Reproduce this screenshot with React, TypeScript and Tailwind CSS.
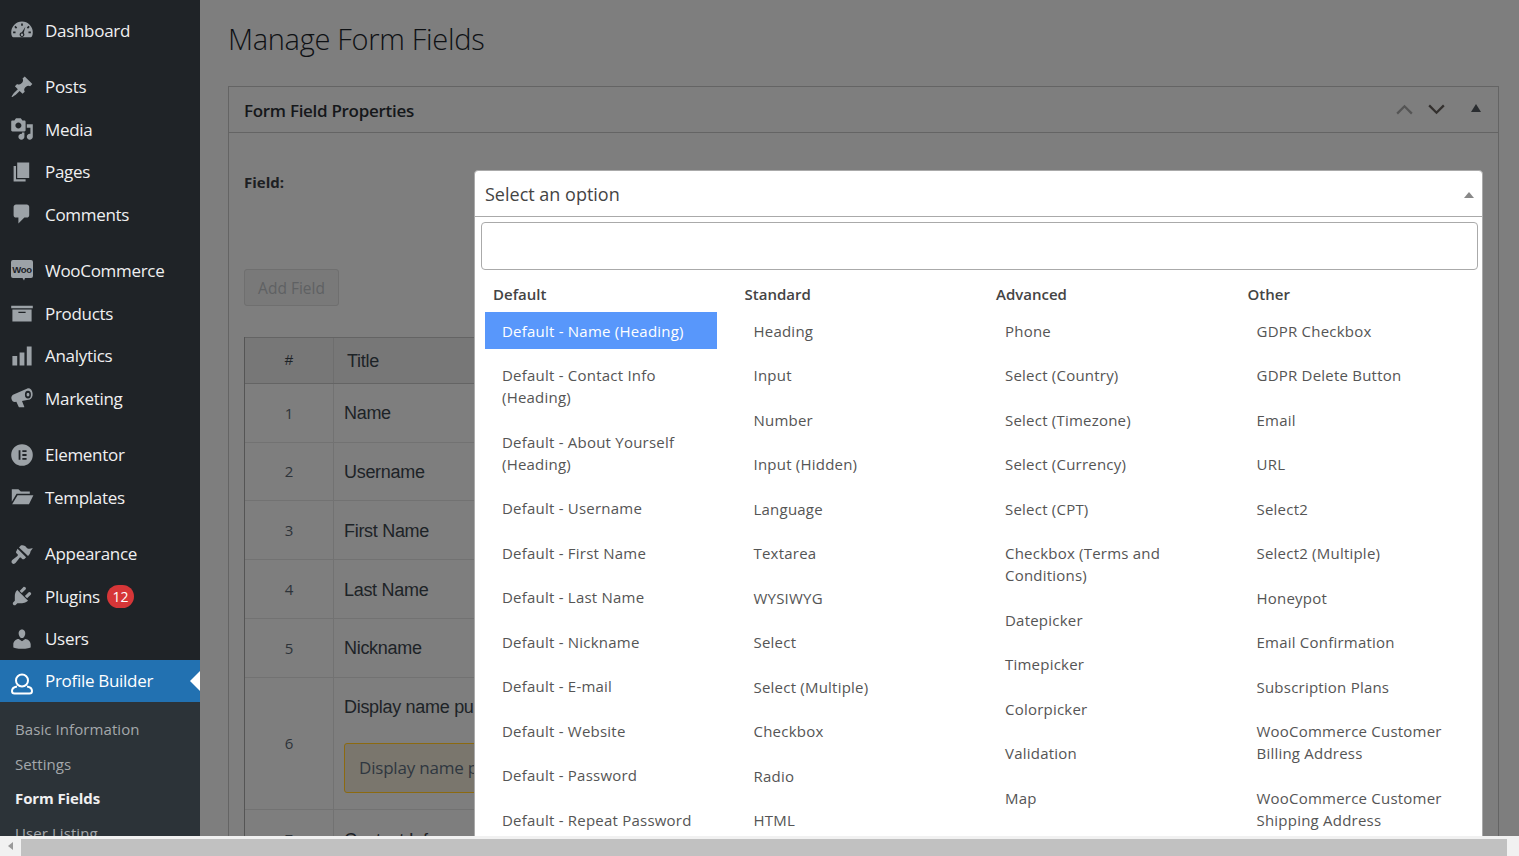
const icons: Record<string, string> = {
  dashboard:
    "M10 3a9 9 0 0 0-9 9c0 1.5.3 2.7.9 3.7.2.2.4.3.7.3h14.8c.3 0 .5-.1.7-.3.6-1 .9-2.2.9-3.7a9 9 0 0 0-9-9zM9.3 4.5h1.4v2H9.3zM4.6 6.5l1.4 1.4-1 1-1.4-1.4zM15.4 6.5l1 1-1.4 1.4-1-1zM2.6 11.3h2v1.4h-2zM15.4 11.3h2v1.4h-2zM12.8 7.2l-1.4 5.2c.4.4.6.9.6 1.4 0 1.2-.9 2-2 2s-2-.8-2-2c0-1.1.8-2 1.9-2zM10 13a1 1 0 1 0 0 2 1 1 0 0 0 0-2z",
  posts:
    "M10.44 3.02l1.82-1.82 6.36 6.35-1.83 1.82c-1.05-.68-2.48-.57-3.41.36l-.75.75c-.92.93-1.04 2.35-.35 3.41l-1.83 1.82-2.41-2.41-2.8 2.79c-.42.42-3.38 2.71-3.8 2.29s1.86-3.39 2.28-3.81l2.79-2.79L4.1 9.36l1.83-1.82c1.05.69 2.48.57 3.4-.36l.75-.75c.93-.92 1.05-2.35.36-3.41z",
  media:
    "M13 11V4c0-.55-.45-1-1-1h-1.67L9 1H5L3.67 3H2c-.55 0-1 .45-1 1v7c0 .55.45 1 1 1h10c.55 0 1-.45 1-1zM7 4.5c1.38 0 2.5 1.12 2.5 2.5S8.38 9.5 7 9.5 4.5 8.38 4.5 7 5.62 4.5 7 4.5zM14 6h5v10.5c0 1.38-1.12 2.5-2.5 2.5S14 17.88 14 16.5s1.12-2.5 2.5-2.5c.17 0 .34.02.5.05V9h-3V6zm-4 8.05V13h2v3.5c0 1.38-1.12 2.5-2.5 2.5S7 17.88 7 16.5 8.12 14 9.5 14c.17 0 .34.02.5.05z",
  pages: "M6 15V2h10v13H6zm-1 1h8v2H3V5h2v11z",
  comments: "M5 2h9c1.1 0 2 .9 2 2v7c0 1.1-.9 2-2 2h-2l-5 5v-5H5c-1.1 0-2-.9-2-2V4c0-1.1.9-2 2-2z",
  products: "M19 4v2H1V4h18zM2 7h16v10H2V7zm11 3V9H7v1h6z",
  analytics: "M18 18V2h-4v16h4zm-6 0V7H8v11h4zm-6 0v-8H2v8h4z",
  marketing:
    "M14.5 2c2.2-.5 3.9 1.3 4.3 3.9.4 2.6-.7 4.9-2.7 5.5l-.8.1-5.3 1 1.9 4.7c.1.3-.1.6-.4.6H7.8c-.2 0-.4-.1-.5-.4l-2-4.2-1.2.2C2.8 13.500 1.500 12.300 1.200 10.600c-.3-1.500.3-2.800 1.300-3.400zM14.900 4a2.500 3.200 0 1 0 .1 6.400 2.500 3.200 0 0 0-.1-6.400zM15 5.700a1.200 1.500 0 1 1 0 3 1.200 1.500 0 0 1 0-3z",
  elementor:
    "M10 1a9 9 0 1 0 0 18 9 9 0 0 0 0-18zM7.2 6h1.500v8H7.2V6zm3.100 0h3.500v1.500h-3.500V6zm0 3.200h3.500v1.600h-3.500V9.200zm0 3.300h3.500V14h-3.500v-1.500z",
  templates: "M1.500 3.500h5.500l2 2h7.500v1.700H5.500L1.500 14V3.500zM6.300 8.500H19.500L15.800 16H1.800z",
  appearance:
    "M7.500 4.500l1.500-1.500c.6-.6 2.300-.5 3.500.3 1.200.8 1.300 1.700 2.200 2.100.9.4 2.700.3 4.300-.4-.6 1.200-1.600 2-1.900 3-.3 1-.3 1.900-1.300 2.900-.3.3-.5.5-.8.7zM6.300 5.600l7.100 7.100-1.400 1.400c-.5.5-1.300.5-1.900 0l-.9-.9c-.4-.4-1-.3-1.300.1l-3.300 4.300c-.7.8-2 .9-2.800.1s-.7-2.100.1-2.800l4.300-3.300c.4-.3.5-.9.1-1.300l-.9-.9c-.5-.5-.5-1.300 0-1.900z",
  plugins:
    "M13.11 4.36L9.87 7.6 8 5.73l3.24-3.24c.35-.34 1.05-.2 1.56.32.52.51.66 1.21.31 1.55zm-8 1.77l.91-1.12 9.01 9.01-1.19.84c-.71.71-2.63 1.16-3.82 1.16H6.14L4.9 17.26c-.59.59-1.54.59-2.12 0-.59-.58-.59-1.53 0-2.12l1.24-1.24v-3.88c0-1.13.4-3.19 1.09-3.89zm7.26 3.97l3.24-3.24c.34-.35 1.04-.21 1.55.31.52.51.66 1.21.31 1.55l-3.24 3.25z",
  users:
    "M10 9.25c-2.27 0-2.73-3.44-2.73-3.44C7 4.02 7.82 2 9.97 2c2.16 0 2.98 2.02 2.71 3.81 0 0-.41 3.44-2.68 3.44zm0 2.57L12.72 10c2.39 0 4.52 2.33 4.52 4.53v2.49s-3.65 1.13-7.24 1.13c-3.65 0-7.24-1.13-7.24-1.13v-2.49c0-2.25 1.94-4.48 4.47-4.48z",
};

const menu = [
  [{ label: "Dashboard", icon: "dashboard" }],
  [
    { label: "Posts", icon: "posts" },
    { label: "Media", icon: "media" },
    { label: "Pages", icon: "pages" },
    { label: "Comments", icon: "comments" },
  ],
  [
    { label: "WooCommerce", icon: "woo" },
    { label: "Products", icon: "products" },
    { label: "Analytics", icon: "analytics" },
    { label: "Marketing", icon: "marketing" },
  ],
  [
    { label: "Elementor", icon: "elementor" },
    { label: "Templates", icon: "templates" },
  ],
  [
    { label: "Appearance", icon: "appearance" },
    { label: "Plugins", icon: "plugins", badge: "12" },
    { label: "Users", icon: "users" },
  ],
];

const rows = [
  { n: "1", title: "Name", h: "h-[59px]", pad: "pt-[1px]" },
  { n: "2", title: "Username", h: "h-[58px]", pad: "pt-[1px]" },
  { n: "3", title: "First Name", h: "h-[59px]", pad: "pt-[3px]" },
  { n: "4", title: "Last Name", h: "h-[59px]", pad: "pt-[3px]" },
  { n: "5", title: "Nickname", h: "h-[59px]", pad: "pt-[1px]" },
];

const groups = [
  {
    name: "Default",
    options: [
      "Default - Name (Heading)",
      "Default - Contact Info (Heading)",
      "Default - About Yourself (Heading)",
      "Default - Username",
      "Default - First Name",
      "Default - Last Name",
      "Default - Nickname",
      "Default - E-mail",
      "Default - Website",
      "Default - Password",
      "Default - Repeat Password",
    ],
  },
  {
    name: "Standard",
    options: ["Heading", "Input", "Number", "Input (Hidden)", "Language", "Textarea", "WYSIWYG", "Select", "Select (Multiple)", "Checkbox", "Radio", "HTML"],
  },
  {
    name: "Advanced",
    options: ["Phone", "Select (Country)", "Select (Timezone)", "Select (Currency)", "Select (CPT)", "Checkbox (Terms and Conditions)", "Datepicker", "Timepicker", "Colorpicker", "Validation", "Map"],
  },
  {
    name: "Other",
    options: [
      "GDPR Checkbox",
      "GDPR Delete Button",
      "Email",
      "URL",
      "Select2",
      "Select2 (Multiple)",
      "Honeypot",
      "Email Confirmation",
      "Subscription Plans",
      "WooCommerce Customer Billing Address",
      "WooCommerce Customer Shipping Address",
    ],
  },
];

function MenuIcon({ name }: { name: string }) {
  if (name === "woo") {
    return (
      <svg viewBox="0 0 24 24" className="w-[24px] h-[24px]">
        <path d="M3 1h18a2 2 0 0 1 2 2v14a2 2 0 0 1-2 2h-6l-1 2.5-1.5-2.5H3a2 2 0 0 1-2-2V3a2 2 0 0 1 2-2z" fill="#9ca2a7" />
        <text x="12" y="13.5" textAnchor="middle" fontSize="9.5" fontWeight="700" fontFamily="Liberation Sans, sans-serif" fill="#1d2327">
          Woo
        </text>
      </svg>
    );
  }
  return (
    <svg viewBox="0 0 20 20" className="w-[24px] h-[24px]">
      <path d={icons[name]} fill="#9ca2a7" fillRule="evenodd" />
    </svg>
  );
}

function Sidebar() {
  return (
    <aside className="w-[200px] shrink-0 h-full bg-[#1f2327] overflow-hidden pt-[9px] font-['Open_Sans',sans-serif]">
      {menu.map((group, i) => (
        <div key={i} className={i > 0 ? "mt-[14px]" : ""}>
          {group.map((item) => (
            <div key={item.label} className="h-[42.5px] flex items-center text-[#f0f0f1] text-[17px] tracking-[-0.3px]">
              <div className="w-[45px] pl-[10px] flex items-center">
                <MenuIcon name={item.icon} />
              </div>
              <span>{item.label}</span>
              {item.badge && (
                <span className="ml-[7px] w-[27px] h-[23px] rounded-full bg-[#d63638] text-white text-[14px] tracking-normal flex items-center justify-center">
                  {item.badge}
                </span>
              )}
            </div>
          ))}
        </div>
      ))}
      <div className="relative h-[42px] bg-[#2271b1] flex items-center text-white text-[17px] tracking-[-0.3px]">
        <div className="w-[45px] pl-[10px] pt-[3px] flex items-center">
          <svg viewBox="0 0 24 24" className="w-[24px] h-[24px]" fill="none" stroke="#ffffff" strokeWidth="2">
            <circle cx="12" cy="9.5" r="6" />
            <path d="M7 15.5c-3 .5-5 2.5-5 4.5 0 1.5 1 2.5 2.5 2.5h15c1.5 0 2.5-1 2.5-2.5 0-2-2-4-5-4.5" />
          </svg>
        </div>
        <span>Profile Builder</span>
        <div className="absolute right-0 top-[11px] w-0 h-0 border-y-[10px] border-y-transparent border-r-[10px] border-r-white" />
      </div>
      <div className="bg-[#2c3338] pt-[10px] h-[200px] text-[#a4a8ab] text-[15px] tracking-[0.08px]">
        <div className="h-[34.5px] pl-[15px] flex items-center">Basic Information</div>
        <div className="h-[34.5px] pl-[15px] flex items-center">Settings</div>
        <div className="h-[34.5px] pl-[15px] flex items-center font-bold text-[#f0f0f1] tracking-[-0.1px]">Form Fields</div>
        <div className="h-[34.5px] pl-[15px] flex items-center">User Listing</div>
      </div>
    </aside>
  );
}

function FieldDropdown() {
  return (
    <div className="absolute left-[245px] top-[83px] w-[1009px] h-[800px] bg-white border border-[#aaaaaa] rounded-t-[4px] font-['Open_Sans',sans-serif] text-[#444444]">
      <div className="h-[46px] border-b border-[#aaaaaa] pl-[10px] pt-[2px] flex items-center justify-between pr-[8px] text-[18px]">
        <span>Select an option</span>
        <div className="w-0 h-0 border-x-[5px] border-x-transparent border-b-[6px] border-b-[#888888]" />
      </div>
      <div className="ml-[6px] mt-[5px] h-[48px] w-[997px] border border-[#aaaaaa] rounded-[4px]" />
      <div className="grid grid-cols-[repeat(4,251.5px)] pl-[10px] pt-[13px] text-[15px] leading-[22px]">
        {groups.map((group) => (
          <div key={group.name} className="w-[232px]">
            <div className="pl-[8px] h-[22px] font-semibold text-[#444444]">{group.name}</div>
            <div className="mt-[7.3px] flex flex-col gap-[7.5px] tracking-[0.22px]">
              {group.options.map((option) => (
                <div
                  key={option}
                  className={
                    option === "Default - Name (Heading)"
                      ? "pl-[17px] py-[7.5px] bg-[#5897fb] text-white"
                      : "pl-[17px] pr-[20px] py-[7.5px] text-[#555555]"
                  }
                >
                  {option}
                </div>
              ))}
            </div>
          </div>
        ))}
      </div>
    </div>
  );
}

function Panel() {
  return (
    <div className="relative border border-[#646464] bg-[#7e7e7e] h-[800px]">
      <div className="h-[46px] border-b border-[#646464] pl-[15px] pr-[15px] flex items-center justify-between">
        <span className="pt-[2px] font-semibold text-[17px] tracking-[-0.3px] text-[#15171a]">Form Field Properties</span>
        <div className="flex items-center">
          <svg viewBox="0 0 20 12" className="w-[19px] h-[11px]" fill="none" stroke="#555555" strokeWidth="2.5">
            <path d="M2 10.5l8-8 8 8" />
          </svg>
          <svg viewBox="0 0 20 12" className="w-[19px] h-[11px] ml-[13px]" fill="none" stroke="#33302e" strokeWidth="2.5">
            <path d="M2 1.5l8 8 8-8" />
          </svg>
          <div className="ml-[25px] mr-[2px] mb-[4px] w-0 h-0 border-x-[5px] border-x-transparent border-b-[8px] border-b-[#2a2d30]" />
        </div>
      </div>
      <div className="px-[15px]">
        <div className="pt-[38px] h-[136px] font-bold text-[15px] text-[#1d2023]">Field:</div>
        <button className="w-[95px] h-[37px] pt-[3px] border border-[#6f6f6f] rounded-[3px] text-[15.5px] text-[#5f6163] bg-[#797979]">Add Field</button>
        <div className="mt-[31px] border-l border-[#555555] font-['Liberation_Sans',sans-serif]">
          <div className="h-[47px] flex items-center bg-[#777777] border-y border-[#646464]">
            <div className="w-[89px] h-full flex items-center justify-center border-r border-[#6e6e6e] text-[#1d2327] text-[15px]">#</div>
            <div className="pl-[13px] pt-[2px] text-[18px] text-[#1d2327] tracking-[-0.3px]">Title</div>
          </div>
          {rows.map((r) => (
            <div key={r.n} className={"flex border-b border-[#727272] " + r.h}>
              <div className="w-[89px] flex items-center justify-center border-r border-[#727272] text-[#2d3339] text-[15px] font-['Open_Sans',sans-serif]">{r.n}</div>
              <div className={"pl-[10px] flex items-center text-[18px] text-[#1d2327] tracking-[-0.3px] " + r.pad}>{r.title}</div>
            </div>
          ))}
          <div className="flex h-[132px] border-b border-[#727272]">
            <div className="w-[89px] flex items-center justify-center border-r border-[#727272] text-[#2d3339] text-[15px] font-['Open_Sans',sans-serif]">6</div>
            <div className="pl-[10px] pt-[16px] flex-1">
              <div className="text-[18px] text-[#1d2327] tracking-[-0.3px]">Display name publicly as</div>
              <div className="mt-[22px] h-[50px] w-[400px] bg-[#7a766d] border border-[#8c6a10] rounded-[3px] flex items-center pl-[14px] text-[#2f3740] text-[17px] font-['Open_Sans',sans-serif] tracking-[-0.2px]">
                Display name publicly as
              </div>
            </div>
          </div>
          <div className="flex h-[60px]">
            <div className="w-[89px] flex items-center justify-center border-r border-[#727272] text-[#2d3339] text-[15px]">7</div>
            <div className="pl-[10px] pt-[17px] text-[18px] text-[#1d2327] tracking-[-0.3px]">Contact Info</div>
          </div>
        </div>
      </div>
      <FieldDropdown />
    </div>
  );
}

export default function App() {
  return (
    <div className="w-[1519px] h-[856px] overflow-hidden flex flex-col bg-[#7e7e7e] font-['Open_Sans',sans-serif]">
      <div className="flex flex-1 min-h-0">
        <Sidebar />
        <main className="flex-1 min-w-0 pl-[28px] pr-[20px] overflow-hidden">
          <h1 className="h-[86px] pt-[16px] text-[29px] leading-[46px] font-light text-[#0e1114] tracking-[-0.3px]">Manage Form Fields</h1>
          <Panel />
        </main>
      </div>
      <div className="h-[20px] shrink-0 bg-[#f1f1f1] flex items-center pl-[8px] pr-[12px]">
        <div className="w-0 h-0 border-y-[4.5px] border-y-transparent border-r-[5px] border-r-[#9a9a9a] mr-[8px]" />
        <div className="flex-1 h-[17px] mt-[2px] bg-[#c1c1c1]" />
      </div>
    </div>
  );
}
